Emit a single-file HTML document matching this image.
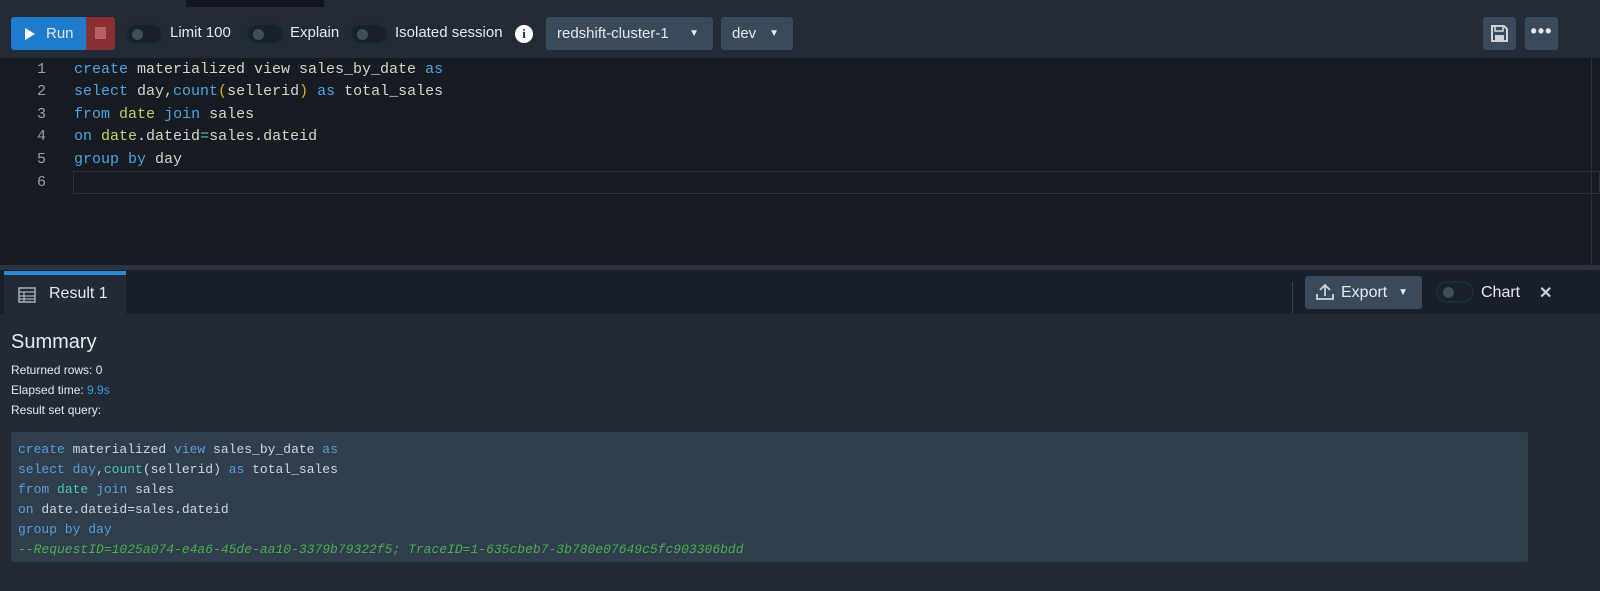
<!DOCTYPE html>
<html><head><style>
*{margin:0;padding:0;box-sizing:border-box}
body{width:1600px;height:591px;overflow:hidden;background:#222b35;font-family:"Liberation Sans",sans-serif;color:#e6e9ec;position:relative}
.abs{position:absolute}
.tb{left:0;top:0;width:1600px;height:58px;background:#222b36}
.btn{border-radius:3px;background:#3a4a5a;height:33px;top:17px;color:#e6e9ec;font-size:15px;line-height:33px}
.tog{width:38px;height:22px;border-radius:11px;background:#19212a;border:2px solid #1c2c38;top:23px}
.tog:after{content:"";position:absolute;left:5px;top:4px;width:11px;height:11px;border-radius:50%;background:#414d59}
.lbl{top:24px;font-size:15px;color:#e6e9ec}
.ed{left:0;top:58px;width:1600px;height:207px;background:#161c21;font-family:"Liberation Mono",monospace;font-size:15px}
.ln{position:absolute;left:20px;width:26px;text-align:right;color:#9aa0a6}
.cl{position:absolute;left:74px;color:#d4d4d4;white-space:pre}
.k{color:#4fa3e0}.y{color:#c8cf63}.g{color:#e0b020}.t{color:#4ec9b0}
.mk{color:#5a9fd8}.mg{color:#4ec9a8}.cm{color:#4caf50;font-style:italic}
</style></head><body>
<div class="abs tb"></div>
<div class="abs" style="left:186px;top:0;width:138px;height:7px;background:#11161b"></div>
<div class="abs btn" style="left:11px;width:75px;background:#1f7ccc;border-radius:3px 0 0 3px;padding-left:35px">Run</div>
<svg class="abs" style="left:25px;top:28px" width="10" height="12"><path d="M0 0L10 6L0 12Z" fill="#fff"/></svg>
<div class="abs btn" style="left:86px;width:29px;background:#8b2f33;border-radius:0 3px 3px 0"></div>
<div class="abs" style="left:95px;top:27px;width:11px;height:12px;background:#b36266"></div>
<div class="abs tog" style="left:125px"></div><div class="abs lbl" style="left:170px">Limit 100</div>
<div class="abs tog" style="left:246px"></div><div class="abs lbl" style="left:290px">Explain</div>
<div class="abs tog" style="left:350px"></div><div class="abs lbl" style="left:395px">Isolated session</div>
<div class="abs" style="left:515px;top:25px;width:18px;height:18px;border-radius:50%;background:#fff;color:#222b36;font-weight:bold;font-size:13px;text-align:center;line-height:18px;font-family:'Liberation Serif',serif">i</div>
<div class="abs btn" style="left:546px;width:167px;padding-left:11px">redshift-cluster-1<span style="position:absolute;right:14px;font-size:10px">▼</span></div>
<div class="abs btn" style="left:721px;width:72px;padding-left:11px">dev<span style="position:absolute;right:14px;font-size:10px">▼</span></div>
<div class="abs btn" style="left:1483px;width:33px"></div>
<svg class="abs" style="left:1490px;top:24px" width="19" height="19" viewBox="0 0 19 19"><path d="M2 2H14L17 5V17H2Z" fill="none" stroke="#cdd3d9" stroke-width="2"/><rect x="5" y="2" width="8" height="5" fill="none" stroke="#cdd3d9" stroke-width="1.6"/><rect x="5" y="11" width="9" height="6" fill="#cdd3d9"/></svg>
<div class="abs btn" style="left:1525px;width:33px;text-align:center;font-size:18px;line-height:28px;font-weight:bold;letter-spacing:1px">•••</div>
<div class="abs ed">
<div class="ln" style="top:3px">1</div><div class="cl" style="top:3px"><span class="k">create</span> materialized view sales_by_date <span class="k">as</span></div>
<div class="ln" style="top:25px">2</div><div class="cl" style="top:25px"><span class="k">select</span> day,<span class="k">count</span><span class="g">(</span>sellerid<span class="g">)</span> <span class="k">as</span> total_sales</div>
<div class="ln" style="top:48px">3</div><div class="cl" style="top:48px"><span class="k">from</span> <span class="y">date</span> <span class="k">join</span> sales</div>
<div class="ln" style="top:70px">4</div><div class="cl" style="top:70px"><span class="k">on</span> <span class="y">date</span>.dateid<span class="t">=</span>sales.dateid</div>
<div class="ln" style="top:93px">5</div><div class="cl" style="top:93px"><span class="k">group</span> <span class="k">by</span> day</div>
<div class="ln" style="top:116px">6</div>
<div class="abs" style="left:73px;top:113px;width:1527px;height:23px;border:1px solid #2c3236"></div>
<div class="abs" style="left:1591px;top:0;width:1px;height:207px;background:#2c3236"></div>
</div>
<div class="abs" style="left:0;top:265px;width:1600px;height:5px;background:#2a3440"></div>
<div class="abs" style="left:0;top:270px;width:1600px;height:44px;background:#19202a"></div>
<div class="abs" style="left:4px;top:271px;width:122px;height:43px;background:#222b35;border-top:4px solid #2b8ad6"></div>
<svg class="abs" style="left:18px;top:287px" width="18" height="16"><rect x="1" y="1" width="16" height="14" fill="none" stroke="#a8b0b8" stroke-width="1.5"/><path d="M1 5H17M1 9H17M1 12H17M6 5V15" stroke="#a8b0b8" stroke-width="1.3"/></svg>
<div class="abs" style="left:49px;top:285px;font-size:16px">Result 1</div>
<div class="abs" style="left:1292px;top:282px;width:1px;height:32px;background:#3a4550"></div>
<div class="abs btn" style="left:1305px;top:276px;width:117px;padding-left:36px;font-size:16px">Export<span style="position:absolute;right:14px;font-size:10px">▼</span></div>
<svg class="abs" style="left:1316px;top:283px" width="18" height="18"><path d="M9 13V2M4 7L9 2L14 7M1 11V16H17V11" fill="none" stroke="#cdd3d9" stroke-width="1.8"/></svg>
<div class="abs tog" style="left:1436px;top:281px"></div>
<div class="abs" style="left:1481px;top:284px;font-size:16px">Chart</div>
<div class="abs" style="left:1539px;top:283px;font-size:16px;font-weight:bold;color:#cdd3d9">✕</div>
<div class="abs" style="left:11px;top:331px;font-size:20px">Summary</div>
<div class="abs" style="left:11px;top:363px;font-size:12px">Returned rows: 0</div>
<div class="abs" style="left:11px;top:383px;font-size:12px">Elapsed time: <span style="color:#3a9ad9">9.9s</span></div>
<div class="abs" style="left:11px;top:403px;font-size:12px">Result set query:</div>
<div class="abs" style="left:11px;top:432px;width:1517px;height:130px;background:#2f3d4c;border-radius:2px;font-family:'Liberation Mono',monospace;font-size:13px;line-height:20px;padding:8px 0 0 7px;white-space:pre;color:#cfd5da"><span class="mk">create</span> materialized <span class="mk">view</span> sales_by_date <span class="mk">as</span>
<span class="mk">select</span> <span class="mk">day</span>,<span class="mg">count</span>(sellerid) <span class="mk">as</span> total_sales
<span class="mk">from</span> <span class="mg">date</span> <span class="mk">join</span> sales
<span class="mk">on</span> date.dateid=sales.dateid
<span class="mk">group by day</span>
<span class="cm">--RequestID=1025a074-e4a6-45de-aa10-3379b79322f5; TraceID=1-635cbeb7-3b780e07649c5fc903306bdd</span></div>
</body></html>
